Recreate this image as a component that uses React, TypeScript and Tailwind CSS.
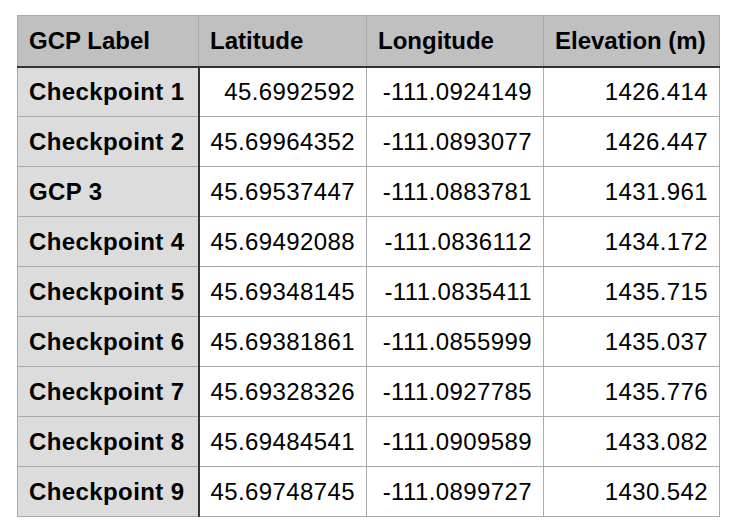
import React from "react";

const rows: [string, string, string, string][] = [
  ["Checkpoint 1", "45.6992592", "-111.0924149", "1426.414"],
  ["Checkpoint 2", "45.69964352", "-111.0893077", "1426.447"],
  ["GCP 3", "45.69537447", "-111.0883781", "1431.961"],
  ["Checkpoint 4", "45.69492088", "-111.0836112", "1434.172"],
  ["Checkpoint 5", "45.69348145", "-111.0835411", "1435.715"],
  ["Checkpoint 6", "45.69381861", "-111.0855999", "1435.037"],
  ["Checkpoint 7", "45.69328326", "-111.0927785", "1435.776"],
  ["Checkpoint 8", "45.69484541", "-111.0909589", "1433.082"],
  ["Checkpoint 9", "45.69748745", "-111.0899727", "1430.542"],
];

const th =
  "border border-[#a9a9a9] border-b-2 border-b-[#333] text-left px-[11px] font-bold whitespace-nowrap tracking-normal";

export default function App() {
  return (
    <div
      className="w-[734px] h-[532px] bg-white pt-[15px] pl-[17px] text-black text-[24px] tracking-[0.4px]"
      style={{ fontFamily: '"Liberation Sans", Arial, sans-serif' }}
    >
      <table className="border-collapse border border-[#a9a9a9] table-fixed w-[702px]">
        <colgroup>
          <col className="w-[181px]" />
          <col className="w-[168px]" />
          <col className="w-[177px]" />
          <col className="w-[176px]" />
        </colgroup>
        <thead>
          <tr className="h-[51px] bg-[#c0c0c0]">
            <th className={th}>GCP Label</th>
            <th className={th}>Latitude</th>
            <th className={th}>Longitude</th>
            <th className={th}>Elevation (m)</th>
          </tr>
        </thead>
        <tbody>
          {rows.map((r) => (
            <tr key={r[0]} className="h-[50px]">
              <td className="border border-[#a9a9a9] border-r-2 border-r-[#333] bg-[#dcdcdc] font-bold px-[11px] whitespace-nowrap">{r[0]}</td>
              <td className="border border-[#a9a9a9] text-right px-[11px] whitespace-nowrap">{r[1]}</td>
              <td className="border border-[#a9a9a9] text-right px-[11px] whitespace-nowrap">{r[2]}</td>
              <td className="border border-[#a9a9a9] text-right px-[11px] whitespace-nowrap">{r[3]}</td>
            </tr>
          ))}
        </tbody>
      </table>
    </div>
  );
}
